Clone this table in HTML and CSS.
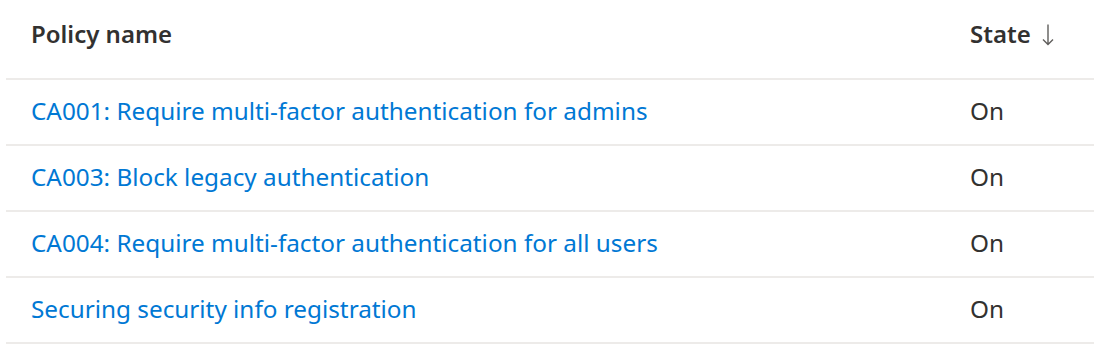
FILE: index.html
```html
<!DOCTYPE html>
<html lang="en">
<head>
<meta charset="utf-8">
<title>Policies</title>
<link rel="stylesheet" href="styles.css">
</head>
<body>
<div class="list">
  <div class="row header">
    <div class="cell name">Policy name</div>
    <div class="cell state">State
      <svg class="sort" width="12" height="22" viewBox="0 0 12 22"><path d="M6 0.5V20.5M1 15.5L6 20.5L11 15.5" fill="none" stroke="#605e5c" stroke-width="1.4"/></svg>
    </div>
  </div>
  <div class="row">
    <div class="cell name"><a href="#">CA001: Require multi-factor authentication for admins</a></div>
    <div class="cell state">On</div>
  </div>
  <div class="row">
    <div class="cell name"><a href="#">CA003: Block legacy authentication</a></div>
    <div class="cell state">On</div>
  </div>
  <div class="row">
    <div class="cell name"><a href="#">CA004: Require multi-factor authentication for all users</a></div>
    <div class="cell state">On</div>
  </div>
  <div class="row">
    <div class="cell name"><a href="#">Securing security info registration</a></div>
    <div class="cell state">On</div>
  </div>
</div>
</body>
</html>
```
FILE: styles.css
```css
html, body {
  margin: 0;
  padding: 0;
  background: #ffffff;
}
body {
  font-family: "Noto Sans", "Open Sans", sans-serif;
  color: #323130;
  font-size: 24.3px;
  line-height: 32px;
}
.list {
  margin-left: 6px;
}
.row {
  display: grid;
  grid-template-columns: 1fr 124px;
  align-items: center;
  height: 61px;
  padding-bottom: 3px;
  border-bottom: 2px solid #edebe9;
}
.row.header {
  height: 68px;
  padding-bottom: 10px;
  font-weight: 600;
  font-size: 24px;
}
.cell.name {
  padding-left: 25px;
  white-space: nowrap;
}
.cell.state {
  display: flex;
  align-items: center;
  gap: 11px;
}
.sort {
  display: block;
  margin-top: 2px;
}
a {
  color: #0078d4;
  text-decoration: none;
}
```
